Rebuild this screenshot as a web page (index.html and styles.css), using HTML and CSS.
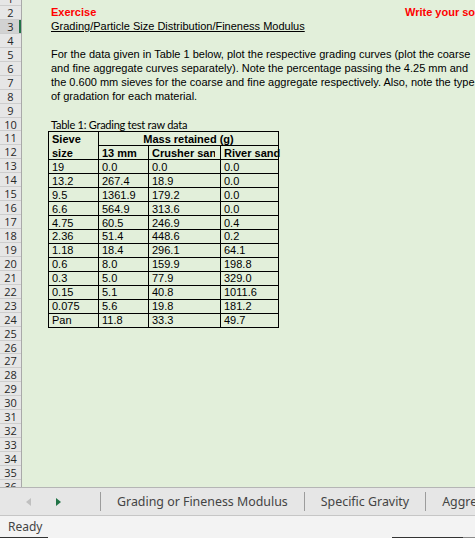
FILE: index.html
```html
<!DOCTYPE html>
<html>
<head>
<meta charset="utf-8">
<link rel="stylesheet" href="styles.css">
</head>
<body>
<div class="app">
  <div class="grid">
    <div class="rowhdr">
      <div class="rh">1</div><div class="rh">2</div><div class="rh sel">3</div><div class="rh">4</div>
      <div class="rh">5</div><div class="rh">6</div><div class="rh">7</div><div class="rh">8</div>
      <div class="rh">9</div><div class="rh">10</div><div class="rh">11</div><div class="rh">12</div>
      <div class="rh">13</div><div class="rh">14</div><div class="rh">15</div><div class="rh">16</div>
      <div class="rh">17</div><div class="rh">18</div><div class="rh">19</div><div class="rh">20</div>
      <div class="rh">21</div><div class="rh">22</div><div class="rh">23</div><div class="rh">24</div>
      <div class="rh">25</div><div class="rh">26</div><div class="rh">27</div><div class="rh">28</div>
      <div class="rh">29</div><div class="rh">30</div><div class="rh">31</div><div class="rh">32</div>
      <div class="rh">33</div><div class="rh">34</div><div class="rh">35</div><div class="rh">36</div>
    </div>
    <div class="cells">
      <div class="r title-row"><span class="ex">Exercise</span><span class="ex">Write your solution here</span></div>
      <div class="r"><span class="sub">Grading/Particle Size Distribution/Fineness Modulus</span></div>
      <div class="r"></div>
      <div class="r">For the data given in Table 1 below, plot the respective grading curves (plot the coarse</div>
      <div class="r">and fine aggregate curves separately). Note the percentage passing the 4.25 mm and</div>
      <div class="r">the 0.600 mm sieves for the coarse and fine aggregate respectively. Also, note the type</div>
      <div class="r">of gradation for each material.</div>
      <div class="r"></div>
      <div class="r caption">Table 1: Grading test raw data</div>
      <table class="data">
        <colgroup><col class="cb"><col class="cc"><col class="cd"><col class="ce"></colgroup>
        <tr><td class="b top">Sieve</td><td class="b ctr" colspan="3">Mass retained (g)</td></tr>
        <tr><td class="b bot">size</td><td class="b">13 mm</td><td class="b clip"><div class="clipbox">Crusher sand</div></td><td class="b">River sand</td></tr>
        <tr><td>19</td><td>0.0</td><td>0.0</td><td>0.0</td></tr>
        <tr><td>13.2</td><td>267.4</td><td>18.9</td><td>0.0</td></tr>
        <tr><td>9.5</td><td>1361.9</td><td>179.2</td><td>0.0</td></tr>
        <tr><td>6.6</td><td>564.9</td><td>313.6</td><td>0.0</td></tr>
        <tr><td>4.75</td><td>60.5</td><td>246.9</td><td>0.4</td></tr>
        <tr><td>2.36</td><td>51.4</td><td>448.6</td><td>0.2</td></tr>
        <tr><td>1.18</td><td>18.4</td><td>296.1</td><td>64.1</td></tr>
        <tr><td>0.6</td><td>8.0</td><td>159.9</td><td>198.8</td></tr>
        <tr><td>0.3</td><td>5.0</td><td>77.9</td><td>329.0</td></tr>
        <tr><td>0.15</td><td>5.1</td><td>40.8</td><td>1011.6</td></tr>
        <tr><td>0.075</td><td>5.6</td><td>19.8</td><td>181.2</td></tr>
        <tr><td>Pan</td><td>11.8</td><td>33.3</td><td>49.7</td></tr>
      </table>
    </div>
  </div>
  <div class="tabbar">
    <div class="nav">
      <svg class="arr" width="6" height="8" viewBox="0 0 6 8"><path d="M5 0 L0 4 L5 8 Z" fill="#c0c0c0"/></svg>
      <svg class="arr" width="6" height="8" viewBox="0 0 6 8"><path d="M0 0 L5 4 L0 8 Z" fill="#217346"/></svg>
    </div>
    <div class="tab">Grading or Fineness Modulus</div>
    <div class="tab">Specific Gravity</div>
    <div class="tab">Aggregate</div>
  </div>
  <div class="status">
    <div class="ready">Ready</div>
    <div class="strip"><span class="s1"></span><span class="s2"></span><span class="s3"></span><span class="s4"></span></div>
  </div>
</div>
</body>
</html>
```
FILE: styles.css
```css
html, body { margin: 0; padding: 0; }
body { width: 475px; height: 538px; overflow: hidden; background: #e2efda; }
.app { width: 475px; height: 538px; display: flex; flex-direction: column; overflow: hidden; }

.grid { height: 487px; display: flex; overflow: hidden; background: #e2efda; flex: none; }
.rowhdr {
  width: 22px; flex: none; background: #e6e6e6; border-right: 1px solid #a9a9a9;
  box-sizing: border-box; margin-top: -7.94px; display: flex; flex-direction: column;
}
.rh {
  height: 13.94px; flex: none; box-sizing: border-box; border-bottom: 1px solid #cdcdcd;
  font-family: "Open Sans", "Noto Sans", sans-serif; font-size: 11px; line-height: 13px;
  color: #262626; text-align: center;
}
.rh.sel { background: #d2d2d2; box-shadow: inset -2px 0 0 #217346; }

.cells { flex: 1; padding: 6px 0 0 26px; overflow: hidden; min-width: 0;
  font-family: "Liberation Sans", Arial, sans-serif; font-size: 11px; color: #000; }
.r { height: 13.94px; line-height: 13.94px; padding-left: 3px; white-space: nowrap; }
.title-row { display: flex; }
.ex { color: #ff0000; font-weight: bold; white-space: nowrap; }
.ex:first-child { width: 354px; flex: none; }
.sub { text-decoration: underline; }
.caption { font-family: "Lato", "Liberation Sans", sans-serif; font-size: 11px; letter-spacing: -0.25px; }

.data { border-collapse: collapse; table-layout: fixed; width: 230px; }
.cb { width: 50px; } .cc { width: 50px; } .cd { width: 72px; } .ce { width: 58px; }
.data td {
  height: 13.94px; padding: 0 3px; line-height: 12px; border: 1px solid #000;
  white-space: nowrap; box-sizing: border-box; font-size: 11px;
}
.data td.b { font-weight: bold; }
.data td.ctr { text-align: center; }
.data td.clip { padding-right: 0; }
.clipbox { overflow: hidden; white-space: nowrap; width: 63px; }
.data td.top { border-bottom-style: hidden; }
.data td.bot { border-top-style: hidden; }

.tabbar {
  height: 29px; flex: none; box-sizing: border-box; background: #e6e6e6;
  border-top: 1px solid #b5b5b5; border-bottom: 1px solid #c6c6c6;
  display: flex; align-items: center; overflow: hidden;
  font-family: "Noto Sans", "Open Sans", sans-serif; font-size: 12.4px; color: #444;
}
.nav { width: 100px; flex: none; display: flex; align-items: center; gap: 24px; padding-left: 26px; box-sizing: border-box; }
.tab { flex: none; height: 19px; line-height: 19px; padding: 0 16px; border-left: 1px solid #9c9c9c; white-space: nowrap; }

.status { height: 22px; flex: none; background: #f3f3f3; display: flex; flex-direction: column; }
.ready { flex: 1; padding-left: 8px; font-family: "Noto Sans", "Open Sans", sans-serif; font-size: 12px; line-height: 21px; color: #444; }
.strip { height: 2px; display: flex; flex: none; }
.strip span { display: block; height: 2px; }
.s1 { width: 48px; background: #333; }
.s2 { width: 344px; background: transparent; }
.s3 { width: 71px; background: #333; }
.s4 { flex: 1; background: #8a8a8a; }
```
